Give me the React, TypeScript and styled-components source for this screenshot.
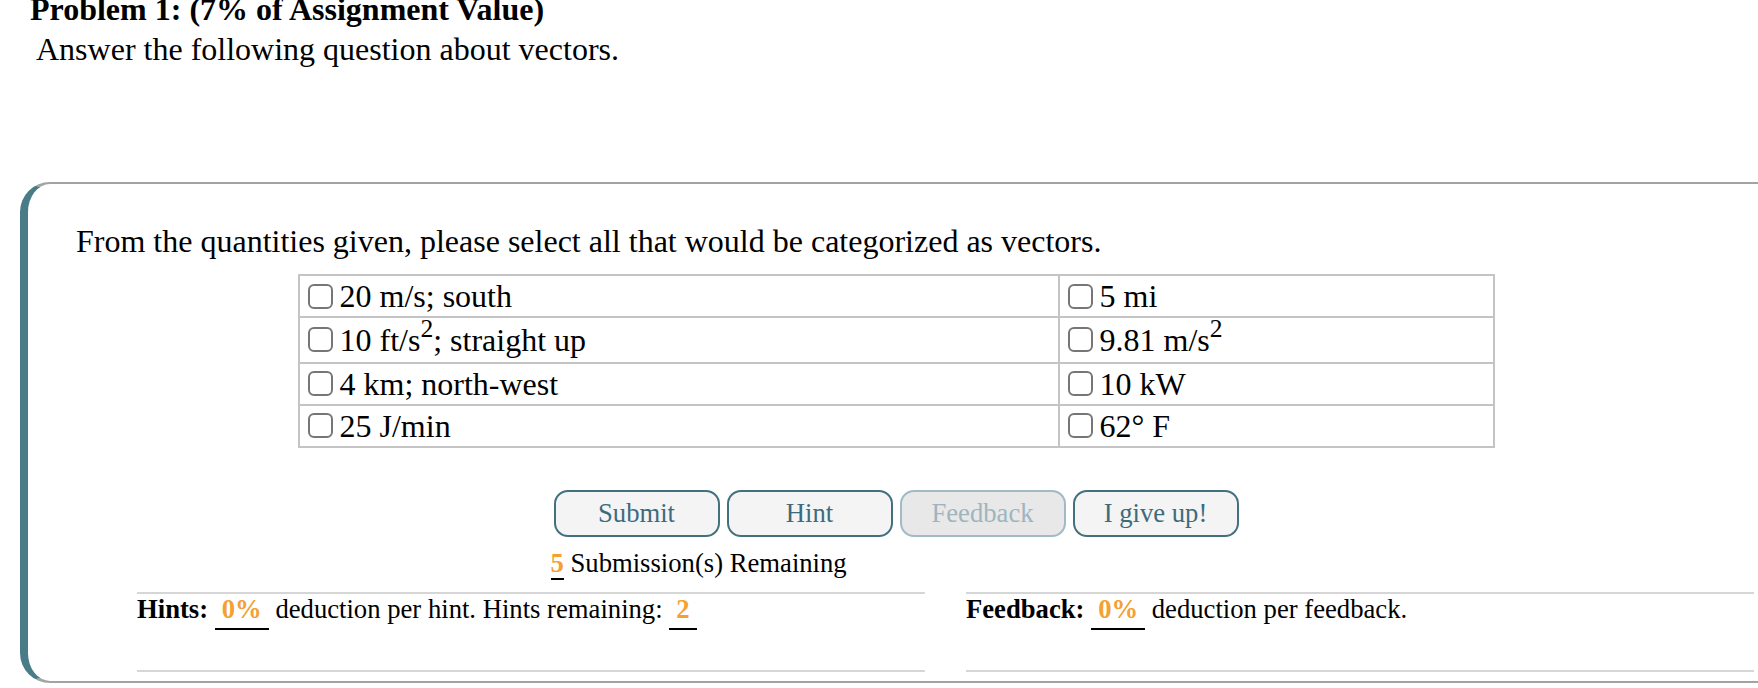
import React from "react";
import styled, { createGlobalStyle } from "styled-components";

const GlobalStyle = createGlobalStyle`
  html, body {
    margin: 0;
    padding: 0;
    background: #ffffff;
    overflow: hidden;
  }
  body {
    font-family: "Liberation Serif", "Times New Roman", serif;
    color: #000000;
  }
`;

const Page = styled.div`
  width: 1758px;
  height: 688px;
  overflow: hidden;
`;

const Header = styled.header`
  margin-top: -9px;
  padding-left: 30px;
  display: flex;
  flex-direction: column;
  gap: 3px;
`;

const Title = styled.h1`
  margin: 0;
  font-size: 32px;
  font-weight: bold;
  line-height: 37px;
`;

const Intro = styled.p`
  margin: 0;
  padding-left: 6px;
  font-size: 32px;
  line-height: 37px;
`;

const Card = styled.section`
  box-sizing: border-box;
  width: 1744px;
  margin: 114px 0 0 20px;
  padding: 39px 48px 9px;
  border-top: 2px solid #a3a3a3;
  border-bottom: 2px solid #a3a3a3;
  border-left: 8px solid #4a7c87;
  border-radius: 30px 0 0 30px;
`;

const Question = styled.p`
  margin: 0;
  font-size: 32px;
  line-height: 37px;
`;

const Choices = styled.table`
  width: 1197px;
  margin: 14px auto 0;
  border-collapse: collapse;
  table-layout: fixed;
`;

const ChoiceCell = styled.td<{ $wide?: boolean }>`
  width: ${({ $wide }) => ($wide ? "752px" : "auto")};
  padding: 2px 4px 2px 2px;
  border: 2px solid #c4c4c4;
`;

const ChoiceLabel = styled.label<{ $tall?: boolean }>`
  display: flex;
  align-items: center;
  height: ${({ $tall }) => ($tall ? "39.5px" : "36px")};
  font-size: 32px;
  line-height: 36px;

  sup {
    font-size: 0.8em;
    line-height: 0;
    vertical-align: 0.55em;
  }
`;

const Box = styled.input`
  appearance: none;
  -webkit-appearance: none;
  flex: none;
  box-sizing: border-box;
  width: 25px;
  height: 25px;
  margin: 0 7px 0 6px;
  border: 2px solid #767676;
  border-radius: 6px;
  background: #ffffff;
`;

const Actions = styled.div`
  width: fit-content;
  margin: 42px auto 0;
`;

const ButtonRow = styled.div`
  display: flex;
  gap: 7px;
`;

const ActionButton = styled.button<{ $muted?: boolean }>`
  box-sizing: border-box;
  width: 166px;
  height: 47px;
  padding: 0;
  border: 2px solid ${({ $muted }) => ($muted ? "#a0bbc5" : "#41707f")};
  border-radius: 14px;
  background: ${({ $muted }) => ($muted ? "#e8e8e8" : "#f4f4f4")};
  color: ${({ $muted }) => ($muted ? "#9fb5be" : "#3d6b7d")};
  font-family: "Liberation Serif", "Times New Roman", serif;
  font-size: 26.67px;
  line-height: 30px;
`;

const Remaining = styled.p`
  margin: 11px 0 0 -3px;
  font-size: 26.67px;
  line-height: 30.67px;
`;

const Count = styled.span<{ $pad?: boolean }>`
  color: #f5a033;
  font-weight: bold;
  border-bottom: 2px solid #000000;
  padding: ${({ $pad }) => ($pad ? "0 7px 4px" : "0")};
`;

const Penalties = styled.div`
  display: grid;
  grid-template-columns: 788px 788px;
  gap: 41px;
  margin: 14px 0 0 61px;
`;

const PenaltyBox = styled.div`
  box-sizing: border-box;
  height: 80px;
  border-top: 2px solid #d6d6d6;
  border-bottom: 2px solid #d6d6d6;
  font-size: 26.67px;
  line-height: 30.67px;
`;

type Choice = { id: string; label: React.ReactNode };

const rows: { tall?: boolean; choices: [Choice, Choice] }[] = [
  {
    choices: [
      { id: "a", label: "20 m/s; south" },
      { id: "b", label: "5 mi" },
    ],
  },
  {
    tall: true,
    choices: [
      {
        id: "c",
        label: (
          <>
            10 ft/s<sup>2</sup>; straight up
          </>
        ),
      },
      {
        id: "d",
        label: (
          <>
            9.81 m/s<sup>2</sup>
          </>
        ),
      },
    ],
  },
  {
    choices: [
      { id: "e", label: "4 km; north-west" },
      { id: "f", label: "10 kW" },
    ],
  },
  {
    choices: [
      { id: "g", label: "25 J/min" },
      { id: "h", label: "62° F" },
    ],
  },
];

const App = () => {
  return (
    <Page>
      <GlobalStyle />
      <Header>
        <Title>Problem 1: (7% of Assignment Value)</Title>
        <Intro>Answer the following question about vectors.</Intro>
      </Header>

      <Card>
        <Question>
          From the quantities given, please select all that would be
          categorized as vectors.
        </Question>

        <Choices>
          <tbody>
            {rows.map((row, index) => (
              <tr key={index}>
                {row.choices.map((choice, col) => (
                  <ChoiceCell key={choice.id} $wide={col === 0}>
                    <ChoiceLabel $tall={row.tall}>
                      <Box type="checkbox" />
                      <span>{choice.label}</span>
                    </ChoiceLabel>
                  </ChoiceCell>
                ))}
              </tr>
            ))}
          </tbody>
        </Choices>

        <Actions>
          <ButtonRow>
            <ActionButton>Submit</ActionButton>
            <ActionButton>Hint</ActionButton>
            <ActionButton $muted disabled>
              Feedback
            </ActionButton>
            <ActionButton>I give up!</ActionButton>
          </ButtonRow>
          <Remaining>
            <Count>5</Count> Submission(s) Remaining
          </Remaining>
        </Actions>

        <Penalties>
          <PenaltyBox>
            <b>Hints:</b> <Count $pad>0%</Count> deduction per hint. Hints
            remaining: <Count $pad>2</Count>
          </PenaltyBox>
          <PenaltyBox>
            <b>Feedback:</b> <Count $pad>0%</Count> deduction per feedback.
          </PenaltyBox>
        </Penalties>
      </Card>
    </Page>
  );
};

export default App;
